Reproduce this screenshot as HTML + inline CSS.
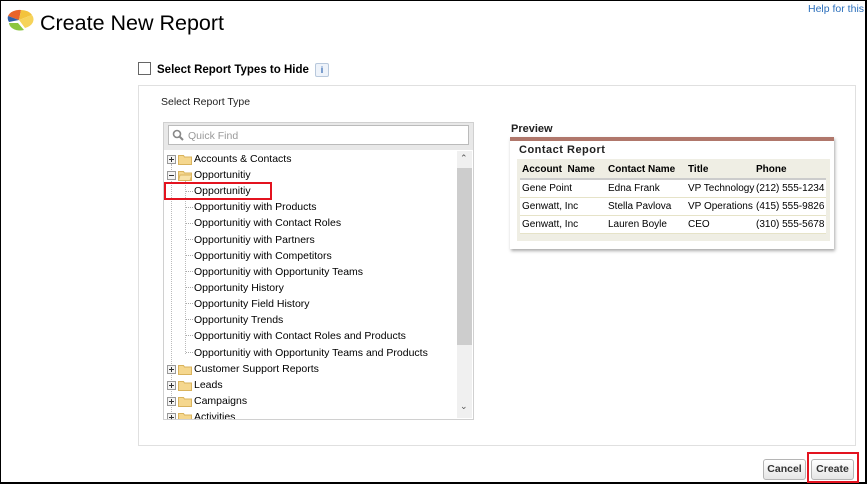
<!DOCTYPE html>
<html><head><meta charset="utf-8"><style>
*{margin:0;padding:0;box-sizing:border-box}
body{width:867px;height:484px;position:relative;background:#fff;font-family:"Liberation Sans",Arial,sans-serif;color:#000;overflow:hidden}
.a{position:absolute}
.frame{left:0;top:0;width:867px;height:484px;border:1px solid #000;border-right:2px solid #000;border-bottom:2px solid #000}
.row{position:absolute;left:194px;font-size:10.5px;white-space:nowrap;line-height:12px}
.pm{position:absolute;left:167px;width:9px;height:9px;border:1px solid #999;background:#f4f4f4}
.pm:before{content:"";position:absolute;left:1px;top:3px;width:5px;height:1px;background:#333}
.pm.p:after{content:"";position:absolute;left:3px;top:1px;width:1px;height:5px;background:#333}
.fd{position:absolute;left:178px;width:14px;height:11px}
.dl{position:absolute;left:186px;width:7px;border-top:1px dotted #aaa}
.tbl td{font-size:10px;padding:0;height:18px;white-space:nowrap}
.btn{position:absolute;top:459px;height:21px;border:1px solid #b5b5b5;border-radius:3px;background:linear-gradient(#fff,#e6e6e6);font-size:10.5px;font-weight:bold;text-align:center;line-height:19px;color:#333}
</style></head><body>
<div class="a frame"></div>
<svg class="a" style="left:5px;top:6px" width="30" height="28" viewBox="0 0 30 28">
<path d="M14 14 L3 10 A12 9 0 0 1 16 4 Z" fill="#e8642a"/>
<path d="M14 14 L16 4 A12 9 0 0 1 27 9 Z" fill="#f3c33c"/>
<path d="M14 14 L27 9 A12 9 0 0 1 20 22 Z" fill="#f6d35a"/>
<path d="M14 14 L3 10 A12 9 0 0 0 4 16 Z" fill="#2f5fa8"/>
<path d="M13 17 L4 17 A11 8 0 0 0 19 24 Z" fill="#8cc63f"/>
</svg>
<div class="a" style="left:40px;top:10px;font-size:21.5px;line-height:26px">Create New Report</div>
<div class="a" style="left:808px;top:3px;font-size:10.5px;color:#2a6ebb">Help for this</div>
<div class="a" style="left:138px;top:62px;width:13px;height:13px;border:1px solid #666"></div>
<div class="a" style="left:157px;top:63px;font-size:11.5px;font-weight:bold;line-height:14px">Select Report Types to Hide</div>
<div class="a" style="left:315px;top:63px;width:14px;height:14px;border:1px solid #b8c8dc;border-radius:2px;background:#eef3fa;color:#3b6db5;font-size:9px;font-weight:bold;text-align:center;line-height:12px">i</div>
<div class="a" style="left:138px;top:85px;width:718px;height:361px;border:1px solid #e0e0e0"></div>
<div class="a" style="left:161px;top:96px;font-size:10.5px;color:#222">Select Report Type</div>
<div class="a" style="left:163px;top:122px;width:311px;height:298px;background:#e8e8e8;border:1px solid #d0d0d0"></div>
<div class="a" style="left:168px;top:125px;width:301px;height:20px;background:#fff;border:1px solid #bbb"></div>
<svg class="a" style="left:172px;top:129px" width="13" height="13"><circle cx="5" cy="5" r="3.5" fill="none" stroke="#888" stroke-width="1.6"/><path d="M7.5 7.5 L11 11" stroke="#888" stroke-width="2"/></svg>
<div class="a" style="left:188px;top:130px;font-size:10.5px;color:#999">Quick Find</div>
<div class="a" style="left:164px;top:150px;width:309px;height:269px;background:#fff;overflow:hidden"></div>
<div class="a" style="left:457px;top:151px;width:15px;height:267px;background:#f0f0f0"></div>
<div class="a" style="left:457px;top:168px;width:15px;height:177px;background:#cdcdcd"></div>
<div class="a" style="left:460px;top:153px;font-size:9px;color:#555">&#8963;</div>
<div class="a" style="left:460px;top:401px;font-size:9px;color:#555">&#8964;</div>
<div class="a" style="left:171px;top:164px;height:256px;border-left:1px dotted #bbb"></div>
<div class="a" style="left:185px;top:180px;height:174px;border-left:1px dotted #bbb"></div>
<div class="a" style="left:164px;top:150px;width:293px;height:269px;overflow:hidden">
<div style="position:relative;left:-164px;top:-149px;width:467px;height:484px">
<div class="pm p" style="top:154px"></div><svg class="fd" style="top:153px" viewBox="0 0 14 11"><path d="M0.5 1.5h5l1 1.5h7v7.5h-13z" fill="#f5d78e" stroke="#d9b35c"/></svg><div class="row" style="top:152px">Accounts &amp; Contacts</div>
<div class="pm" style="top:170px"></div><svg class="fd" style="top:169px" viewBox="0 0 14 11"><path d="M0.5 1.5h5l1 1.5h7v7.5h-13z" fill="#f5d78e" stroke="#d9b35c"/><path d="M2 5h12l-2 5.5H0.5z" fill="#f8e2a8" stroke="#d9b35c"/></svg><div class="row" style="top:168px">Opportunitiy</div>
<div class="dl" style="top:190px"></div><div class="row" style="top:184px">Opportunitiy</div>
<div class="dl" style="top:206px"></div><div class="row" style="top:200px">Opportunitiy with Products</div>
<div class="dl" style="top:222px"></div><div class="row" style="top:216px">Opportunitiy with Contact Roles</div>
<div class="dl" style="top:238px"></div><div class="row" style="top:233px">Opportunitiy with Partners</div>
<div class="dl" style="top:254px"></div><div class="row" style="top:249px">Opportunitiy with Competitors</div>
<div class="dl" style="top:270px"></div><div class="row" style="top:265px">Opportunitiy with Opportunity Teams</div>
<div class="dl" style="top:286px"></div><div class="row" style="top:281px">Opportunity History</div>
<div class="dl" style="top:302px"></div><div class="row" style="top:297px">Opportunity Field History</div>
<div class="dl" style="top:318px"></div><div class="row" style="top:313px">Opportunity Trends</div>
<div class="dl" style="top:334px"></div><div class="row" style="top:329px">Opportunitiy with Contact Roles and Products</div>
<div class="dl" style="top:351px"></div><div class="row" style="top:346px">Opportunitiy with Opportunity Teams and Products</div>
<div class="pm p" style="top:364px"></div><svg class="fd" style="top:363px" viewBox="0 0 14 11"><path d="M0.5 1.5h5l1 1.5h7v7.5h-13z" fill="#f5d78e" stroke="#d9b35c"/></svg><div class="row" style="top:362px">Customer Support Reports</div>
<div class="pm p" style="top:380px"></div><svg class="fd" style="top:379px" viewBox="0 0 14 11"><path d="M0.5 1.5h5l1 1.5h7v7.5h-13z" fill="#f5d78e" stroke="#d9b35c"/></svg><div class="row" style="top:378px">Leads</div>
<div class="pm p" style="top:396px"></div><svg class="fd" style="top:395px" viewBox="0 0 14 11"><path d="M0.5 1.5h5l1 1.5h7v7.5h-13z" fill="#f5d78e" stroke="#d9b35c"/></svg><div class="row" style="top:394px">Campaigns</div>
<div class="pm p" style="top:412px"></div><svg class="fd" style="top:411px" viewBox="0 0 14 11"><path d="M0.5 1.5h5l1 1.5h7v7.5h-13z" fill="#f5d78e" stroke="#d9b35c"/></svg><div class="row" style="top:410px">Activities</div>
</div></div>
<div class="a" style="left:164px;top:182px;width:108px;height:18px;border:2px solid #e3131f"></div>
<div class="a" style="left:511px;top:123px;font-size:11px;font-weight:bold;color:#222">Preview</div>
<div class="a" style="left:510px;top:137px;width:324px;height:112px;background:#fff;box-shadow:1px 2px 3px #aaa;border-top:4px solid #b0776b"></div>
<div class="a" style="left:519px;top:144px;font-size:11px;font-weight:bold;letter-spacing:0.5px;color:#222">Contact Report</div>
<div class="a" style="left:517px;top:159px;width:313px;height:82px;background:#efeee4"></div>
<table class="a tbl" style="left:520px;top:161px;width:306px;border-collapse:collapse">
<tr><td style="font-weight:bold;border-bottom:2px solid #ccc;padding-left:2px;width:88px">Account&nbsp; Name</td><td style="font-weight:bold;border-bottom:2px solid #ccc;width:80px">Contact Name</td><td style="font-weight:bold;border-bottom:2px solid #ccc;width:68px">Title</td><td style="font-weight:bold;border-bottom:2px solid #ccc">Phone</td></tr>
<tr style="background:#fff"><td style="padding-left:2px;border-bottom:1px solid #e6e3c8">Gene Point</td><td style="border-bottom:1px solid #e6e3c8">Edna Frank</td><td style="border-bottom:1px solid #e6e3c8">VP Technology</td><td style="border-bottom:1px solid #e6e3c8">(212) 555-1234</td></tr>
<tr style="background:#fff"><td style="padding-left:2px;border-bottom:1px solid #e6e3c8">Genwatt, Inc</td><td style="border-bottom:1px solid #e6e3c8">Stella Pavlova</td><td style="border-bottom:1px solid #e6e3c8">VP Operations</td><td style="border-bottom:1px solid #e6e3c8">(415) 555-9826</td></tr>
<tr style="background:#fff"><td style="padding-left:2px;border-bottom:1px solid #e6e3c8">Genwatt, Inc</td><td style="border-bottom:1px solid #e6e3c8">Lauren Boyle</td><td style="border-bottom:1px solid #e6e3c8">CEO</td><td style="border-bottom:1px solid #e6e3c8">(310) 555-5678</td></tr>
</table>
<div class="btn" style="left:763px;width:43px">Cancel</div>
<div class="btn" style="left:811px;width:43px">Create</div>
<div class="a" style="left:807px;top:452px;width:52px;height:31px;border:2px solid #e3131f"></div>
</body></html>
